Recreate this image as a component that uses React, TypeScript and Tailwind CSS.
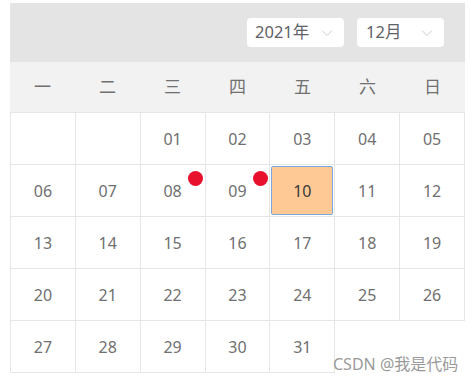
import React from "react";

const weekdays = ["一", "二", "三", "四", "五", "六", "日"];

function Chevron() {
  return (
    <svg width="14" height="14" viewBox="0 0 14 14" fill="none">
      <path d="M2 4.5 L7 9.5 L12 4.5" stroke="#c8ccd3" strokeWidth="1" />
    </svg>
  );
}

export default function App() {
  const cells: (number | null)[] = [null, null];
  for (let i = 1; i <= 31; i++) cells.push(i);
  const font = { fontFamily: '"Noto Sans", "Noto Sans CJK SC", sans-serif' };
  return (
    <div className="relative w-[474px] h-[385px] bg-white" style={font}>
      <div className="ml-[10px] pt-[3px] w-[455px]">
        <div className="h-[59px] bg-[#e4e4e4] flex items-center justify-end gap-[13px] pr-[21px]">
          <div className="w-[97px] h-[29px] bg-white rounded-[4px] flex items-center justify-between pl-[8px] pr-[10px] text-[16.5px] text-[#606266]">
            <span>2021年</span>
            <Chevron />
          </div>
          <div className="w-[87px] h-[29px] bg-white rounded-[4px] flex items-center justify-between pl-[9px] pr-[10px] text-[16.5px] text-[#606266]">
            <span>12月</span>
            <Chevron />
          </div>
        </div>
        <div className="h-[50px] bg-[#f2f2f2] grid grid-cols-7 items-center text-[17px] text-[#707070]">
          {weekdays.map((w) => (
            <div key={w} className="text-center">{w}</div>
          ))}
        </div>
        <div className="grid grid-cols-7 border-l border-t border-[#e6e6e6] w-[455px]">
          {cells.map((d, i) => (
            <div
              key={i}
              className="relative h-[52px] border-r border-b border-[#e6e6e6] flex items-center justify-center text-[16px] text-[#707070]"
            >
              {d === 10 ? (
                <div className="absolute inset-0 m-[1px] bg-[#ffc995] border border-[#7aa7dc] rounded-[2px] flex items-center justify-center text-[#3a3a3a]">
                  10
                </div>
              ) : (
                d !== null && <span>{String(d).padStart(2, "0")}</span>
              )}
              {(d === 8 || d === 9) && (
                <div className="absolute left-[47px] top-[6px] w-[15px] h-[15px] rounded-full bg-[#e8112d]" />
              )}
            </div>
          ))}
        </div>
      </div>
      <div className="absolute left-[333px] top-[356px] text-[16px] text-[#9a9a9a] leading-none">
        CSDN @我是代码
      </div>
    </div>
  );
}
